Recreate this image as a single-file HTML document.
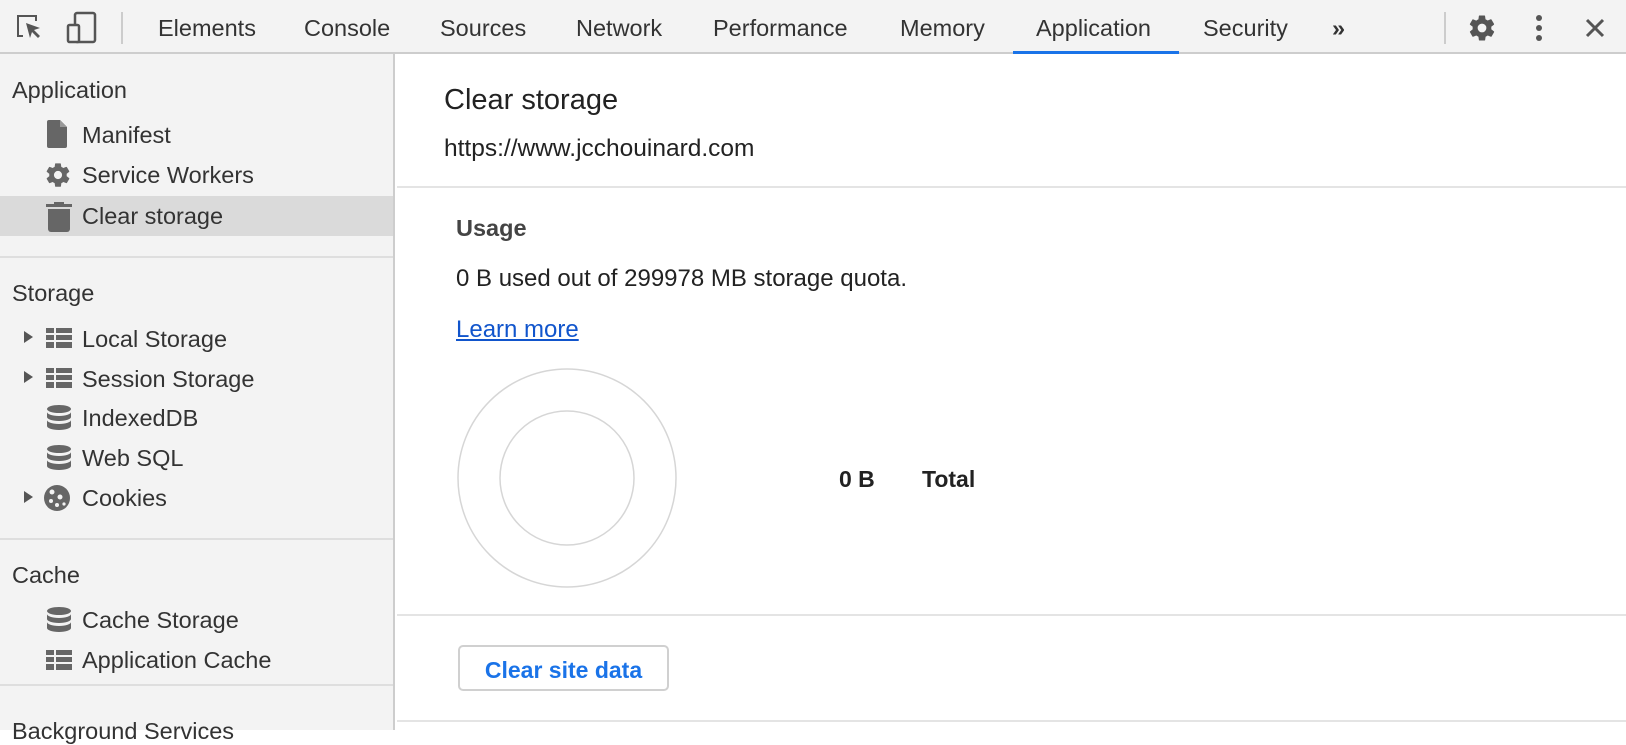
<!DOCTYPE html>
<html><head><meta charset="utf-8"><style>
*{margin:0;padding:0;box-sizing:border-box}
body{width:1626px;height:730px;overflow:hidden;background:#fff;font-family:"Liberation Sans",Arial,sans-serif;color:#333;position:relative}
.a{position:absolute;white-space:nowrap}
#tb{position:absolute;left:0;top:0;width:1626px;height:54px;background:#f3f3f3;border-bottom:2px solid #cdcdcd}
.tab{position:absolute;top:15px;font-size:23.5px;color:#333}
#sb{position:absolute;left:0;top:54px;width:395px;height:676px;background:#f3f3f3;border-right:2px solid #cdcdcd}
.h{position:absolute;left:12px;font-size:23.5px;color:#333}
.it{position:absolute;left:82px;font-size:23.5px;color:#333}
.sep{position:absolute;left:0;width:393px;height:2px;background:#dedede}
.ic{position:absolute;left:46px}
.tri{position:absolute;left:24px;width:0;height:0;border-top:6px solid transparent;border-bottom:6px solid transparent;border-left:9px solid #555}
.hs{position:absolute;left:397px;width:1229px;height:2px;background:#e4e4e4}
</style></head><body>
<div id="tb">
<svg class="a" style="left:14px;top:12px" width="32" height="32" viewBox="0 0 32 32"><path d="M3 3h20v6h-2V5H5v18h4v2H3z" fill="#555"/><path d="M12 11l14 5-6 2 6 6-2 2-6-6-2 6z" fill="#555"/></svg>
<svg class="a" style="left:66px;top:11px" width="32" height="34" viewBox="0 0 32 34"><rect x="9" y="2" width="20" height="29" rx="2" fill="none" stroke="#555" stroke-width="2.5"/><rect x="2" y="14" width="11" height="17" rx="1.5" fill="#f3f3f3" stroke="#555" stroke-width="2.5"/></svg>
<div class="a" style="left:121px;top:12px;width:2px;height:32px;background:#ccc"></div>
<div class="tab" style="left:158px">Elements</div>
<div class="tab" style="left:304px">Console</div>
<div class="tab" style="left:440px">Sources</div>
<div class="tab" style="left:576px">Network</div>
<div class="tab" style="left:713px">Performance</div>
<div class="tab" style="left:900px">Memory</div>
<div class="tab" style="left:1036px">Application</div>
<div class="a" style="left:1013px;top:51px;width:166px;height:3px;background:#1a73e8"></div>
<div class="tab" style="left:1203px">Security</div>
<div class="tab" style="left:1332px;font-weight:bold">»</div>
<div class="a" style="left:1444px;top:12px;width:2px;height:32px;background:#ccc"></div>
<svg class="a" style="left:1467px;top:13px" width="30" height="30" viewBox="0 0 24 24"><path fill="#555" d="M19.4 13c.04-.3.06-.6.06-1s-.02-.7-.06-1l2.1-1.650c.2-.15.24-.42.12-.64l-2-3.460c-.12-.22-.4-.3-.6-.22l-2.5 1c-.52-.4-1.080-.73-1.7-.98l-.38-2.650A.49.49 0 0 0 14 2h-4c-.25 0-.46.18-.5.42l-.37 2.650c-.62.25-1.180.58-1.7.98l-2.5-1c-.22-.08-.48 0-.6.22l-2 3.460c-.13.22-.07.49.12.64L4.57 11c-.04.3-.07.65-.07 1s.03.7.07 1l-2.1 1.650c-.2.15-.25.42-.13.64l2 3.460c.12.22.4.3.6.22l2.5-1c.52.4 1.080.73 1.7.98l.37 2.650c.04.24.25.42.5.42h4c.25 0 .46-.18.5-.42l.37-2.650c.62-.25 1.180-.58 1.7-.98l2.5 1c.22.08.48 0 .6-.22l2-3.460c.12-.22.07-.49-.12-.64zM12 15.5A3.5 3.5 0 1 1 12 8.5a3.5 3.5 0 0 1 0 7z"/></svg>
<svg class="a" style="left:1531px;top:14px" width="16" height="30" viewBox="0 0 16 30"><circle cx="8" cy="4" r="3" fill="#555"/><circle cx="8" cy="14" r="3" fill="#555"/><circle cx="8" cy="24" r="3" fill="#555"/></svg>
<svg class="a" style="left:1584px;top:17px" width="22" height="22" viewBox="0 0 22 22"><path d="M3 3L19 19M19 3L3 19" stroke="#555" stroke-width="3"/></svg>
</div>

<div id="sb">
<div class="h" style="top:23px">Application</div>
<svg class="ic" style="top:66px;left:47px" width="20" height="28" viewBox="0 0 20 28"><path d="M2 0h11l7 7v19a2 2 0 0 1-2 2H2a2 2 0 0 1-2-2V2a2 2 0 0 1 2-2z" fill="#666"/><path d="M13 0v7h7" fill="#999"/></svg>
<div class="it" style="top:68px">Manifest</div>
<svg class="ic" style="top:107px;left:44px" width="28" height="28" viewBox="0 0 24 24"><path fill="#666" d="M19.4 13c.04-.3.06-.6.06-1s-.02-.7-.06-1l2.1-1.650c.2-.15.24-.42.12-.64l-2-3.460c-.12-.22-.4-.3-.6-.22l-2.5 1c-.52-.4-1.080-.73-1.7-.98l-.38-2.650A.49.49 0 0 0 14 2h-4c-.25 0-.46.18-.5.42l-.37 2.650c-.62.25-1.180.58-1.7.98l-2.5-1c-.22-.08-.48 0-.6.22l-2 3.460c-.13.22-.07.49.12.64L4.57 11c-.04.3-.07.65-.07 1s.03.7.07 1l-2.1 1.650c-.2.15-.25.42-.13.64l2 3.460c.12.22.4.3.6.22l2.5-1c.52.4 1.080.73 1.7.98l.37 2.650c.04.24.25.42.5.42h4c.25 0 .46-.18.5-.42l.37-2.650c.62-.25 1.180-.58 1.7-.98l2.5 1c.22.08.48 0 .6-.22l2-3.460c.12-.22.07-.49-.12-.64zM12 15.5A3.5 3.5 0 1 1 12 8.5a3.5 3.5 0 0 1 0 7z"/></svg>
<div class="it" style="top:108px">Service Workers</div>
<div class="a" style="left:0;top:142px;width:393px;height:40px;background:#dadada"></div>
<svg class="ic" style="top:148px;left:46px" width="26" height="30" viewBox="0 0 26 30"><rect x="0" y="2" width="26" height="3" fill="#666"/><rect x="8" y="0" width="10" height="3" fill="#666"/><path d="M2 7h22v20a3 3 0 0 1-3 3H5a3 3 0 0 1-3-3z" fill="#666"/></svg>
<div class="it" style="top:149px">Clear storage</div>
<div class="sep" style="top:202px"></div>
<div class="h" style="top:226px">Storage</div>
<div class="tri" style="top:277px"></div>
<svg class="ic" style="top:274px" width="26" height="20" viewBox="0 0 26 20"><g fill="#666"><rect x="0" y="0" width="8" height="5"/><rect x="10" y="0" width="16" height="5"/><rect x="0" y="7" width="8" height="5"/><rect x="10" y="7" width="16" height="5"/><rect x="0" y="14" width="8" height="6"/><rect x="10" y="14" width="16" height="6"/></g></svg>
<div class="it" style="top:272px">Local Storage</div>
<div class="tri" style="top:317px"></div>
<svg class="ic" style="top:314px" width="26" height="20" viewBox="0 0 26 20"><g fill="#666"><rect x="0" y="0" width="8" height="5"/><rect x="10" y="0" width="16" height="5"/><rect x="0" y="7" width="8" height="5"/><rect x="10" y="7" width="16" height="5"/><rect x="0" y="14" width="8" height="6"/><rect x="10" y="14" width="16" height="6"/></g></svg>
<div class="it" style="top:312px">Session Storage</div>
<svg class="ic" style="top:351px" width="26" height="26" viewBox="0 0 26 26"><g fill="#666"><ellipse cx="13" cy="4" rx="12" ry="4"/><path d="M1 7c0 2 5 4 12 4s12-2 12-4v5c0 2-5 4-12 4S1 14 1 12z"/><path d="M1 15c0 2 5 4 12 4s12-2 12-4v6c0 2-5 4-12 4S1 23 1 21z"/></g></svg>
<div class="it" style="top:351px">IndexedDB</div>
<svg class="ic" style="top:391px" width="26" height="26" viewBox="0 0 26 26"><g fill="#666"><ellipse cx="13" cy="4" rx="12" ry="4"/><path d="M1 7c0 2 5 4 12 4s12-2 12-4v5c0 2-5 4-12 4S1 14 1 12z"/><path d="M1 15c0 2 5 4 12 4s12-2 12-4v6c0 2-5 4-12 4S1 23 1 21z"/></g></svg>
<div class="it" style="top:391px">Web SQL</div>
<div class="tri" style="top:437px"></div>
<svg class="ic" style="top:430px;left:43px" width="28" height="28" viewBox="0 0 28 28"><circle cx="14" cy="14" r="13" fill="#666"/><g fill="#f3f3f3"><circle cx="9" cy="8" r="2.5"/><circle cx="17" cy="13" r="2.5"/><circle cx="8" cy="17" r="2"/><circle cx="14" cy="21" r="2"/><circle cx="21" cy="20" r="1.6"/></g></svg>
<div class="it" style="top:431px">Cookies</div>
<div class="sep" style="top:484px"></div>
<div class="h" style="top:508px">Cache</div>
<svg class="ic" style="top:553px" width="26" height="26" viewBox="0 0 26 26"><g fill="#666"><ellipse cx="13" cy="4" rx="12" ry="4"/><path d="M1 7c0 2 5 4 12 4s12-2 12-4v5c0 2-5 4-12 4S1 14 1 12z"/><path d="M1 15c0 2 5 4 12 4s12-2 12-4v6c0 2-5 4-12 4S1 23 1 21z"/></g></svg>
<div class="it" style="top:553px">Cache Storage</div>
<svg class="ic" style="top:596px" width="26" height="20" viewBox="0 0 26 20"><g fill="#666"><rect x="0" y="0" width="8" height="5"/><rect x="10" y="0" width="16" height="5"/><rect x="0" y="7" width="8" height="5"/><rect x="10" y="7" width="16" height="5"/><rect x="0" y="14" width="8" height="6"/><rect x="10" y="14" width="16" height="6"/></g></svg>
<div class="it" style="top:593px">Application Cache</div>
<div class="sep" style="top:630px"></div>
<div class="h" style="top:664px">Background Services</div>
</div>

<div class="a" style="left:444px;top:84px;font-size:29px;color:#222">Clear storage</div>
<div class="a" style="left:444px;top:135px;font-size:24.5px;color:#222">https://www.jcchouinard.com</div>
<div class="hs" style="top:186px"></div>
<div class="a" style="left:456px;top:215px;font-size:23.5px;font-weight:bold;color:#444">Usage</div>
<div class="a" style="left:456px;top:265px;font-size:24px;color:#222">0 B used out of 299978 MB storage quota.</div>
<div class="a" style="left:456px;top:316px;font-size:24px;color:#1155cc;text-decoration:underline">Learn more</div>
<svg class="a" style="left:455px;top:366px" width="224" height="224"><circle cx="112" cy="112" r="109" fill="none" stroke="#d6d6d6" stroke-width="1.5"/><circle cx="112" cy="112" r="67" fill="none" stroke="#d6d6d6" stroke-width="1.5"/></svg>
<div class="a" style="left:839px;top:466px;font-size:23px;font-weight:bold;color:#222">0 B</div>
<div class="a" style="left:922px;top:466px;font-size:23px;font-weight:bold;color:#222">Total</div>
<div class="hs" style="top:614px"></div>
<div class="a" style="left:458px;top:645px;width:211px;height:46px;border:2px solid #d0d0d0;border-radius:5px;background:#fff;color:#1a73e8;font-size:23px;font-weight:bold;text-align:center;line-height:46px">Clear site data</div>
<div class="hs" style="top:720px"></div>
</body></html>
